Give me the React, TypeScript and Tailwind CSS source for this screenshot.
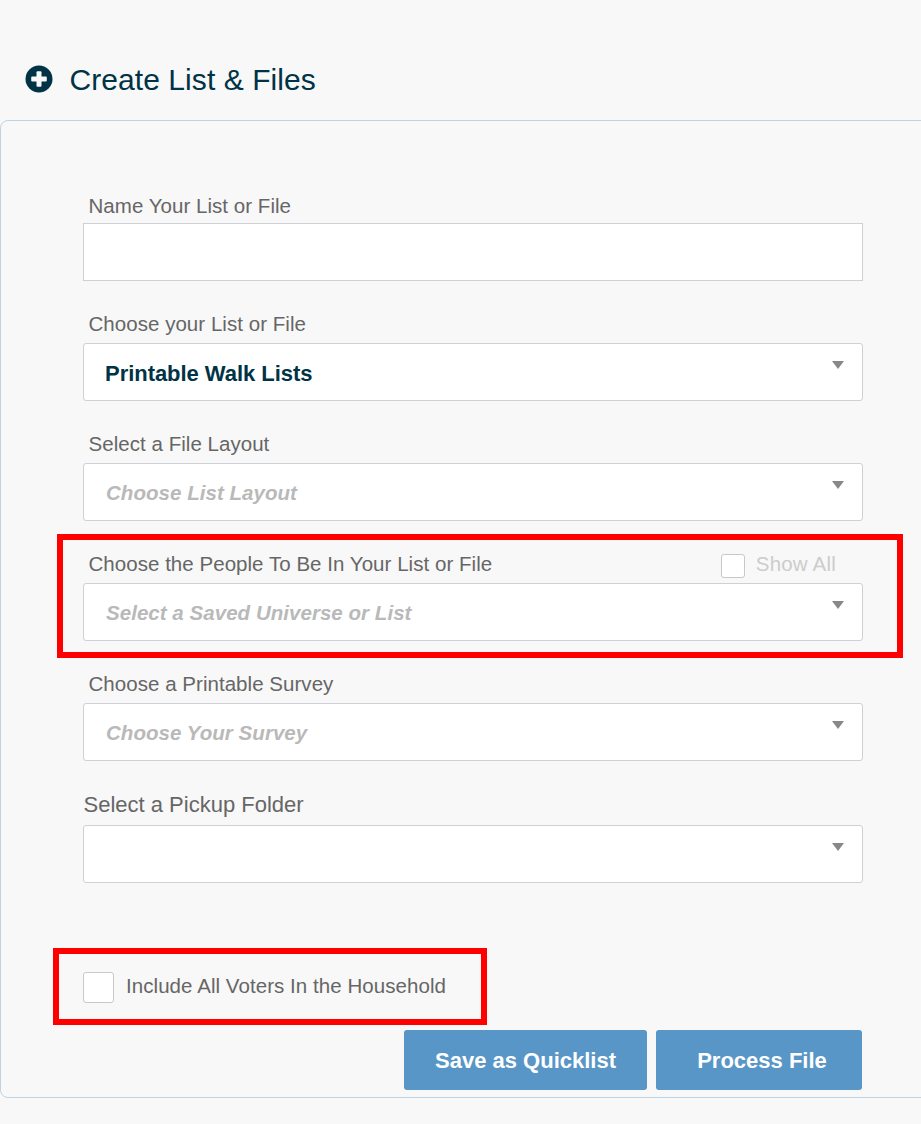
import React from "react";

function Arrow() {
  return (
    <svg width="12" height="8" viewBox="0 0 12 8" className="mt-[17px]">
      <path d="M0 0h12L6 8z" fill="#888" />
    </svg>
  );
}

interface FieldProps {
  label: string;
  value?: string;
  chosen?: boolean;
  labelClass: string;
  children?: React.ReactNode;
}

function Field({ label, value, chosen, labelClass, children }: FieldProps) {
  return (
    <div>
      <div className={"flex items-center justify-between text-[#666666] " + labelClass}>
        <span>{label}</span>
        {children}
      </div>
      <div className="flex h-[58px] justify-between rounded-[3px] border border-[#cdd0d6] bg-white pr-[18px] pl-[21px]">
        <span
          className={
            "font-bold " +
            (chosen
              ? "pt-[2px] text-[22px] leading-[56px] tracking-[-0.04px] text-[#003345]"
              : "pt-[1px] pl-px text-[20.5px] leading-[56px] tracking-[0.04px] text-[#b9b9b9] italic")
          }
        >
          {value}
        </span>
        <Arrow />
      </div>
    </div>
  );
}

const label = "pl-[5.5px] text-[20.5px] tracking-[0.04px]";

export default function App() {
  return (
    <div className="h-[1124px] w-full overflow-hidden bg-[#f8f8f8] pt-[60px] font-['Liberation_Sans',Arial,sans-serif]">
      <header className="flex h-[60px] items-start pl-[25px]">
        <svg width="28" height="28" viewBox="0 0 28 28" className="mt-[5px]">
          <circle cx="14" cy="14" r="13.5" fill="#003345" />
          <rect x="6.2" y="11.5" width="15.6" height="5" rx="1" fill="#f8f8f8" />
          <rect x="11.5" y="6.2" width="5" height="15.6" rx="1" fill="#f8f8f8" />
        </svg>
        <h1 className="ml-[16.5px] text-[30px] leading-[39px] tracking-[0.07px] text-[#003345]">Create List &amp; Files</h1>
      </header>
      <main className="h-[978px] w-[940px] rounded-[8px] border border-[#bdd3e3] pt-[70px] pl-[82px]">
        <div className="w-[780px]">
          <div className={"flex h-[32px] items-center pb-[2px] text-[#666666] " + label}>Name Your List or File</div>
          <input className="mb-[30px] block h-[58px] w-full border border-[#cdd0d6] bg-white" />
          <Field label="Choose your List or File" value="Printable Walk Lists" chosen labelClass={"h-[32px] pb-[5px] " + label} />
          <Field label="Select a File Layout" value="Choose List Layout" labelClass={"h-[62px] pt-[24px] " + label} />
          <div className="relative">
            <Field
              label="Choose the People To Be In Your List or File"
              value="Select a Saved Universe or List"
              labelClass={"h-[62px] pt-[24px] pr-[27px] " + label}
            >
              <label className="flex items-center text-[#cccccc]">
                <input type="checkbox" className="mt-[4px] mr-[10.5px] h-[24px] w-[24px] appearance-none rounded-[3px] border border-[#c8c8c8] bg-white" />
                <span className="tracking-[0.2px]">Show All</span>
              </label>
            </Field>
            <div className="pointer-events-none absolute top-[13px] left-[-26px] h-[124px] w-[846px] border-[6px] border-[#ff0000]" />
          </div>
          <Field label="Choose a Printable Survey" value="Choose Your Survey" labelClass={"h-[62px] pt-[24px] " + label} />
          <Field label="Select a Pickup Folder" labelClass="h-[64px] pt-[23px] pl-[0.5px] text-[22px]" />
        </div>
        <div className="mt-[65px] ml-[-30px] h-[77px] w-[434px] border-[6px] border-[#ff0000] pt-[18px] pl-[24px]">
          <label className="flex h-[31px] items-start text-[20.5px] text-[#666666]">
            <input type="checkbox" className="mr-[12px] h-[31px] w-[31px] appearance-none rounded-[3px] border border-[#c8c8c8] bg-white" />
            <span className="leading-[27px] tracking-[0.06px]">Include All Voters In the Household</span>
          </label>
        </div>
        <div className="mt-[5px] flex gap-[9px] pl-[321px] text-[22px] font-bold text-white">
          <button className="h-[60px] w-[243px] rounded-[3px] bg-[#5796c6]">Save as Quicklist</button>
          <button className="h-[60px] w-[206px] rounded-[3px] bg-[#5796c6] pl-[6px]">Process File</button>
        </div>
      </main>
    </div>
  );
}
